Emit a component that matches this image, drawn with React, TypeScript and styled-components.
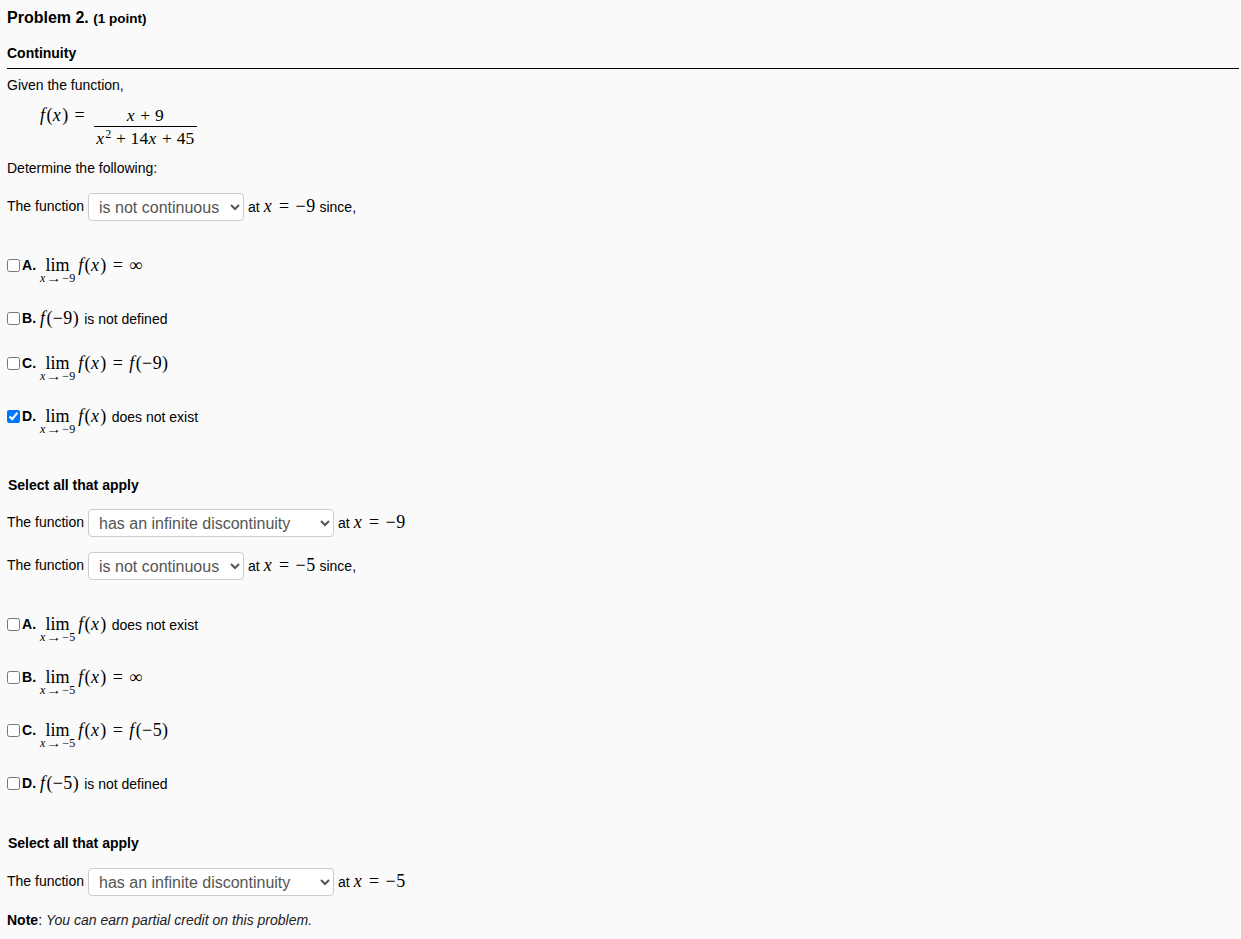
import React from 'react';
import styled, { createGlobalStyle } from 'styled-components';

const Global = createGlobalStyle`
  html, body {
    margin: 0;
    padding: 0;
    background: #fafafa;
  }
  body {
    font-family: "Liberation Sans", Arial, sans-serif;
    color: #000;
  }
`;

const Page = styled.div`
  padding: 0 2px 0 7px;
`;

const Title = styled.h2`
  margin: 8px 0 0;
  font-size: 16px;
  line-height: 20px;
  font-weight: bold;
`;

const Points = styled.span`
  font-size: 13.5px;
`;

const Heading = styled.h3`
  margin: 16px 0 0;
  font-size: 14px;
  line-height: 16px;
  font-weight: bold;
  padding-bottom: 7px;
  border-bottom: 1px solid #000;
`;

const Para = styled.div<{ $mt: number }>`
  margin-top: ${p => p.$mt}px;
  font-size: 14px;
  line-height: 18px;
`;

const Bold = styled.div<{ $mt: number }>`
  margin-top: ${p => p.$mt}px;
  font-size: 14px;
  line-height: 18px;
  font-weight: bold;
  padding-left: 1px;
`;

const Display = styled.div`
  margin-top: 11px;
  padding-left: 33px;
  display: flex;
  align-items: center;
`;

const Math = styled.span`
  font-family: "Liberation Serif", "Times New Roman", serif;
  font-size: 18px;
  letter-spacing: 0.4px;
  white-space: nowrap;
`;

const V = styled.i`
  font-family: "Liberation Serif", "Times New Roman", serif;
  font-style: italic;
  padding-right: 1px;
`;

const Op = styled.span`
  padding: 0 6px;
`;

const Frac = styled.span`
  display: inline-flex;
  flex-direction: column;
  align-items: center;
  margin-left: 3px;
  line-height: 20px;
  font-size: 17.5px;
  letter-spacing: 0.2px;
`;

const Numer = styled.span`
  padding: 0 3px 1px;
`;

const Denom = styled.span`
  border-top: 1.3px solid #000;
  padding: 1px 2px 0;
`;

const Sup = styled.sup`
  font-size: 12px;
  vertical-align: 6px;
  line-height: 0;
`;

const SelectRow = styled.div<{ $mt: number }>`
  margin-top: ${p => p.$mt}px;
  display: flex;
  align-items: center;
  font-size: 14px;
  height: 30px;
  gap: 4px;
`;

const Select = styled.select<{ $w: number }>`
  width: ${p => p.$w}px;
  height: 28px;
  font-family: "Liberation Sans", Arial, sans-serif;
  font-size: 16px;
  color: #555;
  background: #fff;
  border: 1px solid #ccc;
  border-radius: 4px;
  padding: 0 6px 0 6px;
  margin-top: 2px;
`;

const Option = styled.div<{ $mt: number }>`
  margin-top: ${p => p.$mt}px;
  display: flex;
  align-items: flex-start;
  font-size: 14px;
  line-height: 20px;
`;

const Check = styled.input`
  width: 13px;
  height: 13px;
  margin: 4px 2px 0 0;
  accent-color: #0075ff;
`;

const Letter = styled.b`
  font-size: 14px;
  margin-right: 4px;
`;

const Limit = styled.span`
  display: inline-flex;
  flex-direction: column;
  align-items: center;
  margin-right: 3px;
  letter-spacing: 0;
`;

const Lim = styled.span`
  line-height: 20px;
`;

const Under = styled.span`
  font-size: 12px;
  line-height: 11px;
  margin-top: -2px;
`;

const Arrow = styled.span`
  display: inline-block;
  transform: scaleX(1.3);
  margin: 0 2px;
`;

const Text = styled.span`
  font-family: "Liberation Sans", Arial, sans-serif;
  font-size: 14px;
  letter-spacing: 0;
  margin-left: 5px;
`;

const Note = styled.div`
  margin-top: 15px;
  font-size: 14px;
  line-height: 18px;
  i { color: #222; }
`;

const fx = (
  <>
    <V>f</V>(<V>x</V>)
  </>
);

function LimOf({ a }: { a: string }) {
  return (
    <Limit>
      <Lim>lim</Lim>
      <Under>
        <V>x</V><Arrow>→</Arrow>−{a}
      </Under>
    </Limit>
  );
}

type Opt = { letter: string; checked?: boolean; body: React.ReactNode };

function Choice({ o, mt }: { o: Opt; mt: number }) {
  return (
    <Option $mt={mt}>
      <Check type="checkbox" checked={!!o.checked} readOnly />
      <Letter>{o.letter}.</Letter>
      <Math>{o.body}</Math>
    </Option>
  );
}

function SinceRow({ a, mt }: { a: string; mt: number }) {
  return (
    <SelectRow $mt={mt}>
      The function
      <Select $w={156} defaultValue="nc">
        <option value="nc">is not continuous</option>
        <option value="c">is continuous</option>
      </Select>
      <span>
        at <Math><V>x</V><Op>=</Op>−{a}</Math> since,
      </span>
    </SelectRow>
  );
}

function KindRow({ a, mt }: { a: string; mt: number }) {
  return (
    <SelectRow $mt={mt}>
      The function
      <Select $w={246} defaultValue="inf">
        <option value="inf">has an infinite discontinuity</option>
        <option value="rem">has a removable discontinuity</option>
        <option value="jump">has a jump discontinuity</option>
      </Select>
      <span>
        at <Math><V>x</V><Op>=</Op>−{a}</Math>
      </span>
    </SelectRow>
  );
}

export default function App() {
  const first: Opt[] = [
    { letter: 'A', body: <><LimOf a="9" />{fx}<Op>=</Op>∞</> },
    { letter: 'B', body: <><V>f</V>(−9)<Text>is not defined</Text></> },
    { letter: 'C', body: <><LimOf a="9" />{fx}<Op>=</Op><V>f</V>(−9)</> },
    { letter: 'D', checked: true, body: <><LimOf a="9" />{fx}<Text>does not exist</Text></> },
  ];
  const second: Opt[] = [
    { letter: 'A', body: <><LimOf a="5" />{fx}<Text>does not exist</Text></> },
    { letter: 'B', body: <><LimOf a="5" />{fx}<Op>=</Op>∞</> },
    { letter: 'C', body: <><LimOf a="5" />{fx}<Op>=</Op><V>f</V>(−5)</> },
    { letter: 'D', body: <><V>f</V>(−5)<Text>is not defined</Text></> },
  ];

  return (
    <Page>
      <Global />
      <Title>
        Problem 2. <Points>(1 point)</Points>
      </Title>
      <Heading>Continuity</Heading>
      <Para $mt={7}>Given the function,</Para>
      <Display>
        <Math>
          {fx}<Op>=</Op>
          <Frac>
            <Numer>
              <V>x</V> + 9
            </Numer>
            <Denom>
              <V>x</V><Sup>2</Sup> + 14<V>x</V> + 45
            </Denom>
          </Frac>
        </Math>
      </Display>
      <Para $mt={11}>Determine the following:</Para>
      <SinceRow a="9" mt={14} />
      {first.map((o, i) => (
        <Choice key={o.letter} o={o} mt={i === 0 ? 34 : 24} />
      ))}
      <Bold $mt={41}>Select all that apply</Bold>
      <KindRow a="9" mt={13} />
      <SinceRow a="5" mt={13} />
      {second.map((o, i) => (
        <Choice key={o.letter} o={o} mt={i === 0 ? 34 : 24} />
      ))}
      <Bold $mt={40}>Select all that apply</Bold>
      <KindRow a="5" mt={14} />
      <Note>
        <b>Note</b>: <i>You can earn partial credit on this problem.</i>
      </Note>
    </Page>
  );
}
